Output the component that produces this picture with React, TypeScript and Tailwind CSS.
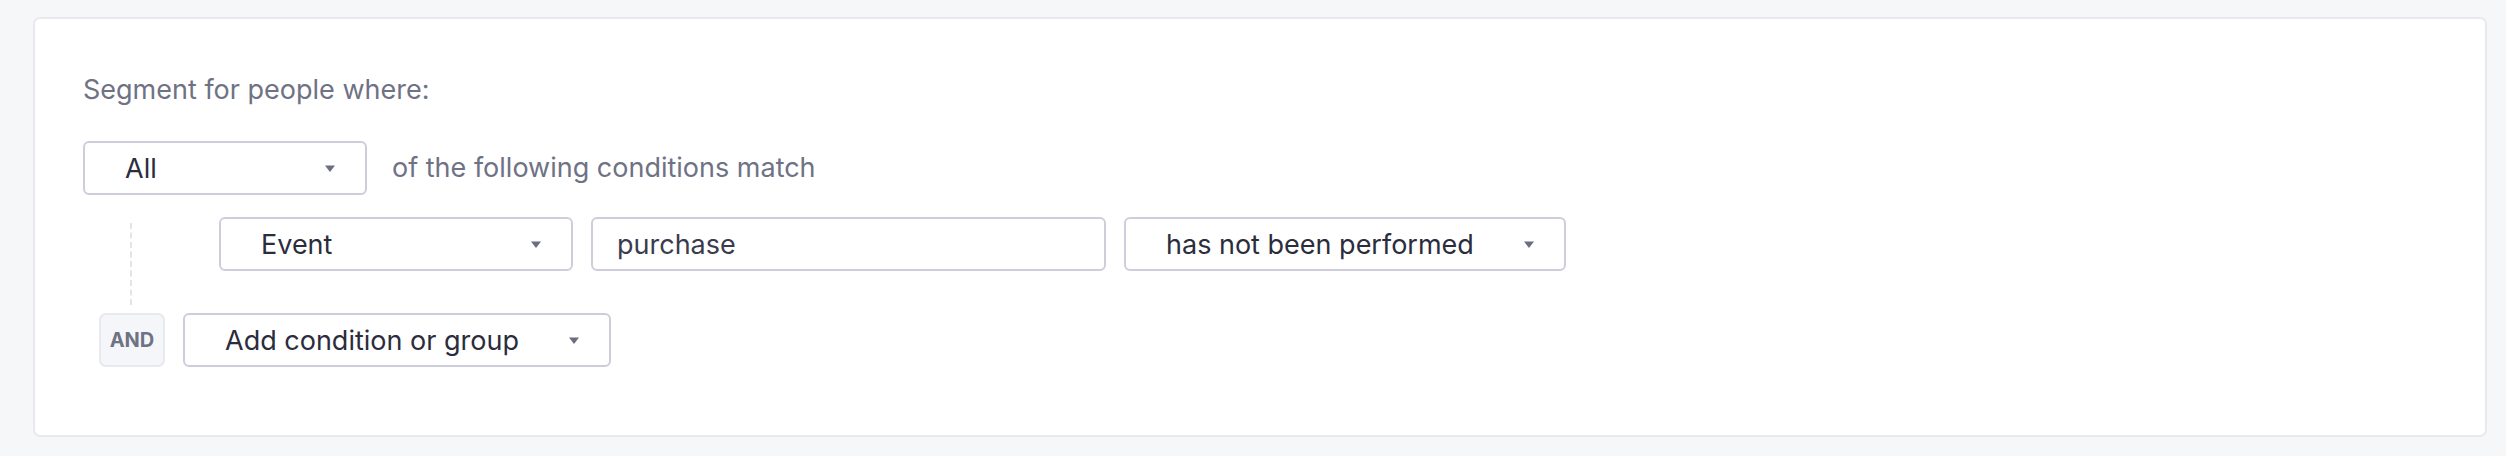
import React from "react";

const font = { fontFamily: "Inter, 'Noto Sans', sans-serif" };

function Caret() {
  return (
    <svg className="w-[10px] h-[7px] flex-shrink-0" viewBox="0 0 10 7" fill="#6b6e80">
      <path d="M0 0.5h10L5 7z" />
    </svg>
  );
}

function Select({ label, width }: { label: string; width: string }) {
  return (
    <div
      className={`${width} h-[54px] flex items-center justify-between pl-[40px] pr-[30px] bg-white border-2 border-[#cdcedb] rounded-[6px] text-[27px] text-[#2b2d3d]`}
    >
      <span className="leading-none">{label}</span>
      <Caret />
    </div>
  );
}

export default function App() {
  return (
    <div className="min-h-[456px] bg-[#f6f7f9] pt-[17px] pl-[33px] pr-[19px]" style={font}>
      <div className="h-[420px] bg-white border-2 border-[#e8e9ee] rounded-[7px] pl-[48px] pt-[54px]">
        {/* Heading */}
        <p className="text-[27px] leading-[34px] text-[#6f7285]">Segment for people where:</p>

        <div className="mt-[34px] flex flex-col">
          {/* Row 1: match selector */}
          <div className="flex items-center">
            <Select label="All" width="w-[284px]" />
            <span className="ml-[25px] text-[27px] text-[#6f7285]">of the following conditions match</span>
          </div>

          {/* Row 2: condition */}
          <div className="flex">
            <div className="w-[136px] flex-shrink-0 flex">
              <div className="ml-[47px] mt-[28px] mb-[8px] border-l-2 border-dashed border-[#e3e4ea]" />
            </div>
            <div className="pt-[22px] pb-[42px] flex items-center gap-[18px]">
              <Select label="Event" width="w-[354px]" />
              <div className="w-[515px] h-[54px] flex items-center pl-[24px] pt-[2px] border-2 border-[#cdcedb] rounded-[6px] text-[27px] text-[#3a3c4e]">
                purchase
              </div>
              <Select label="has not been performed" width="w-[442px]" />
            </div>
          </div>

          {/* Row 3: add */}
          <div className="flex items-center">
            <div className="ml-[16px] w-[66px] h-[54px] flex items-center justify-center bg-[#f5f6f9] border-2 border-[#e8e9ef] rounded-[7px] text-[20px] font-bold text-[#6e7285]">
              AND
            </div>
            <div className="ml-[18px]">
              <Select label="Add condition or group" width="w-[428px]" />
            </div>
          </div>
        </div>
      </div>
    </div>
  );
}
